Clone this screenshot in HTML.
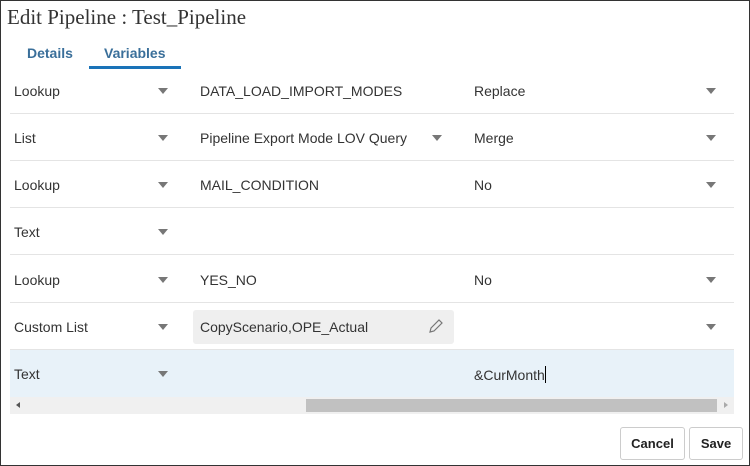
<!DOCTYPE html>
<html><head><style>
*{margin:0;padding:0;box-sizing:border-box}
body{width:750px;height:466px;background:#fff;font-family:"Liberation Sans",sans-serif;position:relative;overflow:hidden}
.frame{position:absolute;left:0;top:0;width:750px;height:466px;border:1px solid #333}
.title{position:absolute;left:7px;top:5px;font-family:"Liberation Serif",serif;font-size:21px;color:#333}
.tab{position:absolute;top:45px;font-size:14px;font-weight:bold;color:#3a6f9a}
.ul{position:absolute;left:89px;top:66px;width:92px;height:3px;background:#1a73b8}
.row{position:absolute;left:10px;width:724px;height:47px;border-bottom:1px solid #e4e4e4;font-size:14px;color:#333}
.row span{position:absolute;top:16px}
.c{position:absolute;top:21px;width:0;height:0;border-left:5px solid transparent;border-right:5px solid transparent;border-top:6px solid #777}
.hl{background:#e8f2f9;border-bottom:none}
.btn{position:absolute;top:427px;height:33px;border:1px solid #ccc;border-radius:3px;background:#fff;font-size:13px;font-weight:bold;color:#222;text-align:center;line-height:31px}
</style></head><body>
<div class="frame"></div>
<div class="title">Edit Pipeline : Test_Pipeline</div>
<div class="tab" style="left:27px">Details</div>
<div class="tab" style="left:104px">Variables</div>
<div class="ul"></div>

<div class="row" style="top:67px"><span style="left:4px">Lookup</span><i class="c" style="left:148px"></i><span style="left:190px">DATA_LOAD_IMPORT_MODES</span><span style="left:464px">Replace</span><i class="c" style="left:696px"></i></div>
<div class="row" style="top:114px"><span style="left:4px">List</span><i class="c" style="left:148px"></i><span style="left:190px">Pipeline Export Mode LOV Query</span><i class="c" style="left:422px"></i><span style="left:464px">Merge</span><i class="c" style="left:696px"></i></div>
<div class="row" style="top:161px"><span style="left:4px">Lookup</span><i class="c" style="left:148px"></i><span style="left:190px">MAIL_CONDITION</span><span style="left:464px">No</span><i class="c" style="left:696px"></i></div>
<div class="row" style="top:208px"><span style="left:4px">Text</span><i class="c" style="left:148px"></i></div>
<div class="row" style="top:256px"><span style="left:4px">Lookup</span><i class="c" style="left:148px"></i><span style="left:190px">YES_NO</span><span style="left:464px">No</span><i class="c" style="left:696px"></i></div>
<div class="row" style="top:303px">
 <div style="position:absolute;left:183px;top:7px;width:261px;height:34px;background:#efefef;border-radius:3px"></div>
 <span style="left:4px">Custom List</span><i class="c" style="left:148px"></i>
 <span style="left:190px">CopyScenario,OPE_Actual</span>
 <svg style="position:absolute;left:418px;top:15px" width="16" height="16" viewBox="0 0 16 16"><path d="M2 14 L3 10 L11 2 L14 5 L6 13 Z" fill="none" stroke="#777" stroke-width="1.2"/></svg>
 <i class="c" style="left:696px"></i></div>
<div class="row hl" style="top:350px"><span style="left:4px">Text</span><i class="c" style="left:148px"></i><span style="left:464px">&amp;CurMonth<b style="display:inline-block;width:1px;height:17px;background:#000;vertical-align:-3px;font-weight:normal"></b></span></div>
<div style="position:absolute;left:10px;top:397px;width:724px;height:17px;background:#f0f0f0"></div>
<div style="position:absolute;left:306px;top:399px;width:411px;height:13px;background:#c1c1c1"></div>
<div style="position:absolute;left:16px;top:402px;border-top:3px solid transparent;border-bottom:3px solid transparent;border-right:4px solid #555"></div>
<div style="position:absolute;left:724px;top:402px;border-top:3px solid transparent;border-bottom:3px solid transparent;border-left:4px solid #aaa"></div>
<div class="btn" style="left:620px;width:65px">Cancel</div>
<div class="btn" style="left:689px;width:54px">Save</div>
</body></html>
